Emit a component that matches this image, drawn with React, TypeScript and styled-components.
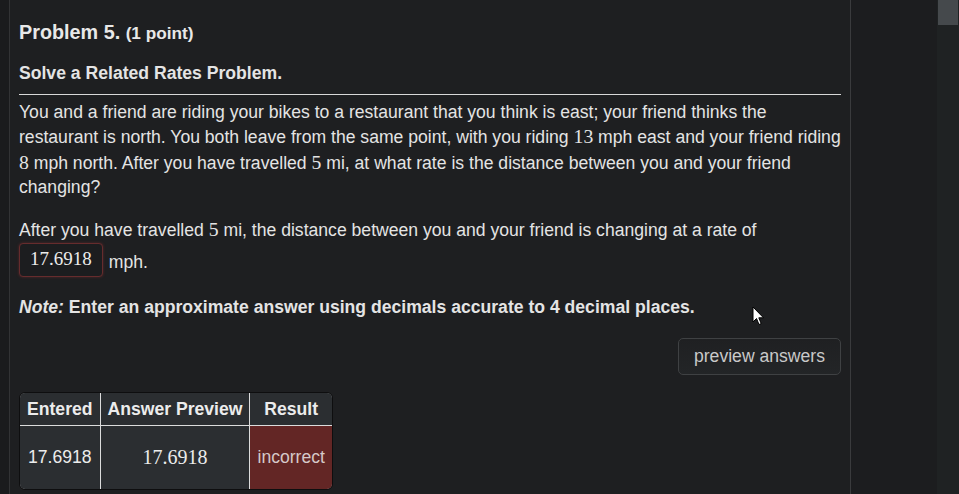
import styled, { createGlobalStyle } from 'styled-components'

const GlobalStyle = createGlobalStyle`
  html, body {
    margin: 0;
    padding: 0;
    background: #1b1c1e;
    font-family: "Liberation Sans", Arial, sans-serif;
    overflow: hidden;
  }
`

const Page = styled.div`
  display: flex;
  height: 494px;
  width: 959px;
  background: #1b1c1e;
`

const Gutter = styled.div`
  width: 9px;
  border-right: 1px solid #323335;
  background: #1a1b1d;
`

const Main = styled.main`
  position: relative;
  width: 822px;
  padding: 20px 9px 0 9px;
  background: #1e1f21;
  border-right: 1px solid #3a3b3d;
  color: #e4e4e4;
  font-size: 17.6px;
  line-height: 24.6px;
`

const SidePane = styled.div`
  flex: 1;
  background: #1c1d1f;
`

const ScrollTrack = styled.div`
  width: 22px;
  background: #1f2223;
  display: flex;
  flex-direction: column;
  align-items: center;
`

const ScrollThumb = styled.div`
  width: 20px;
  height: 25px;
  background: #45494c;
`

const Title = styled.h3`
  margin: 0;
  font-size: 19.8px;
  line-height: 24px;
  font-weight: bold;
  color: #e8e8e8;
`

const Points = styled.span`
  font-size: 17.2px;
`

const Heading = styled.div`
  margin-top: 16px;
  font-weight: bold;
  padding-bottom: 8px;
  border-bottom: 1px solid #d8d8d8;
`

const Para = styled.p<{ $gap?: number }>`
  margin: ${p => p.$gap ?? 18}px 0 0 0;
`

// math numbers render in a serif face, a little larger than the text
const M = styled.span`
  font-family: "Liberation Serif", "Times New Roman", serif;
  font-size: 1.12em;
`

const AnswerBox = styled.span`
  display: inline-flex;
  align-items: center;
  box-sizing: border-box;
  height: 34px;
  margin: 0 6px 7px 0;
  padding: 0 10px;
  vertical-align: middle;
  border: 1px solid #662c2d;
  border-radius: 4px;
  box-shadow: 0 0 3px rgba(170, 50, 50, 0.4);
  background: #1c1d1f;
  font-family: "Liberation Serif", "Times New Roman", serif;
  font-size: 19px;
  color: #ececec;
`

const Note = styled.p`
  margin: 11px 0 0 0;
  font-weight: bold;
`

const ButtonRow = styled.div`
  display: flex;
  justify-content: flex-end;
  margin-top: 19px;
`

const PreviewButton = styled.button`
  height: 37px;
  padding: 0 15px;
  border: 1px solid #3f4143;
  border-radius: 5px;
  background: linear-gradient(#1f2022, #232527);
  color: #c9c9c9;
  font-family: "Liberation Sans", Arial, sans-serif;
  font-size: 17.6px;
`

const TableWrap = styled.div`
  display: inline-block;
  margin-top: 17px;
  border: 1px solid #0e0e0f;
  border-radius: 6px;
  overflow: hidden;
  box-shadow: 0 0 0 1px #bdbdbd inset;
`

const Table = styled.table`
  border-collapse: collapse;
  font-size: 17.6px;
`

const Th = styled.th`
  height: 32px;
  padding: 0 7px;
  background: #2b2e31;
  color: #ececec;
  font-weight: bold;
  border: 1px solid #dcdcdc;
  border-top: none;
  &:first-child { border-left: none; }
  &:last-child { border-right: none; padding: 0 8px; }
`

const Td = styled.td<{ $bad?: boolean; $math?: boolean }>`
  height: 63px;
  padding: 0 7px;
  text-align: center;
  background: ${p => (p.$bad ? '#632625' : '#2b2e31')};
  color: ${p => (p.$bad ? '#d6c9c9' : '#ececec')};
  font-family: ${p => (p.$math ? '"Liberation Serif", "Times New Roman", serif' : 'inherit')};
  font-size: ${p => (p.$math ? '20px' : 'inherit')};
  border: 1px solid #dcdcdc;
  border-bottom: none;
  &:first-child { border-left: none; }
  &:last-child { border-right: none; }
`

const Cursor = styled.svg`
  position: absolute;
  left: 742px;
  top: 306px;
`

export default function App() {
  return (
    <>
      <GlobalStyle />
      <Page>
        <Gutter />
        <Main>
          <Title>
            Problem 5. <Points>(1 point)</Points>
          </Title>
          <Heading>Solve a Related Rates Problem.</Heading>
          <Para $gap={5}>
            You and a friend are riding your bikes to a restaurant that you think is east; your friend thinks the
            restaurant is north. You both leave from the same point, with you riding <M>13</M> mph east and your
            friend riding <M>8</M> mph north. After you have travelled <M>5</M> mi, at what rate is the distance
            between you and your friend changing?
          </Para>
          <Para $gap={17}>
            After you have travelled <M>5</M> mi, the distance between you and your friend is changing at a rate of{' '}
            <AnswerBox>17.6918</AnswerBox>mph.
          </Para>
          <Note>
            <i>Note:</i> Enter an approximate answer using decimals accurate to 4 decimal places.
          </Note>
          <ButtonRow>
            <PreviewButton>preview answers</PreviewButton>
          </ButtonRow>
          <TableWrap>
            <Table>
              <thead>
                <tr>
                  <Th>Entered</Th>
                  <Th>Answer Preview</Th>
                  <Th>Result</Th>
                </tr>
              </thead>
              <tbody>
                <tr>
                  <Td>17.6918</Td>
                  <Td $math>17.6918</Td>
                  <Td $bad>incorrect</Td>
                </tr>
              </tbody>
            </Table>
          </TableWrap>
          <Cursor width="13" height="20" viewBox="0 0 13 20">
            <path d="M1 1 L1 16 L4.5 12.5 L7 18.5 L9.2 17.6 L6.8 11.8 L11.5 11.8 Z" fill="#fff" stroke="#000" strokeWidth="1" />
          </Cursor>
        </Main>
        <SidePane />
        <ScrollTrack>
          <ScrollThumb />
        </ScrollTrack>
      </Page>
    </>
  )
}
